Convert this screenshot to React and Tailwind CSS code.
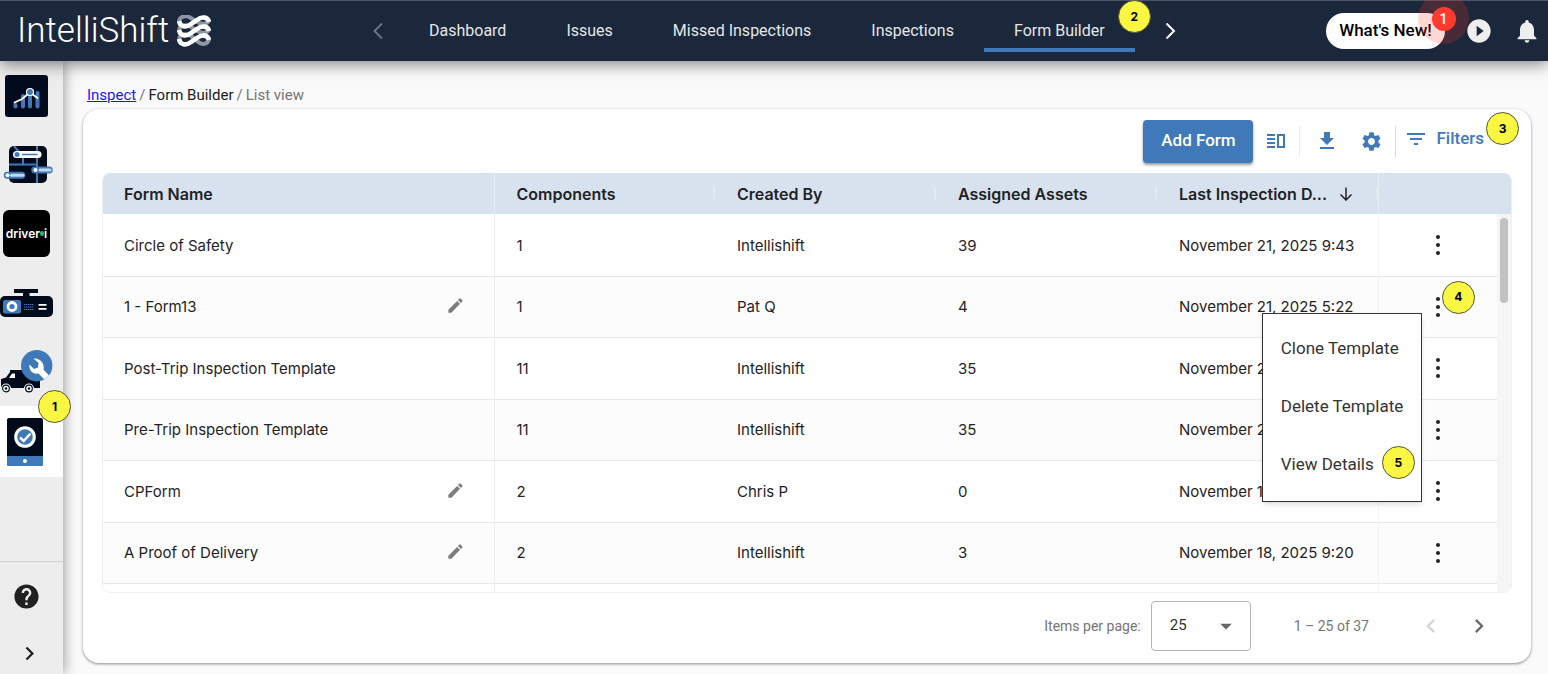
import {
  MdArrowDropDown,
  MdChevronLeft,
  MdChevronRight,
  MdDownload,
  MdEdit,
  MdFilterList,
  MdHelp,
  MdNotifications,
  MdPlayCircleFilled,
  MdSettings,
} from 'react-icons/md';

const tabs = ['Dashboard', 'Issues', 'Missed Inspections', 'Inspections', 'Form Builder'];

const forms = [
  { name: 'Circle of Safety', components: 1, createdBy: 'Intellishift', assets: 39, date: 'November 21, 2025 9:43' },
  { name: '1 - Form13', components: 1, createdBy: 'Pat Q', assets: 4, date: 'November 21, 2025 5:22', editable: true, menuOpen: true },
  { name: 'Post-Trip Inspection Template', components: 11, createdBy: 'Intellishift', assets: 35, date: 'November 20, 2025 8:15' },
  { name: 'Pre-Trip Inspection Template', components: 11, createdBy: 'Intellishift', assets: 35, date: 'November 20, 2025 7:50' },
  { name: 'CPForm', components: 2, createdBy: 'Chris P', assets: 0, date: 'November 19, 2025 4:31', editable: true },
  { name: 'A Proof of Delivery', components: 2, createdBy: 'Intellishift', assets: 3, date: 'November 18, 2025 9:20', editable: true },
];

function Marker({ number, className }) {
  return (
    <span
      className={`absolute z-30 flex size-[33px] items-center justify-center rounded-full border border-[#55553a] bg-[#f9f741] font-['Inter',sans-serif] text-xs font-bold text-black ${className}`}
    >
      {number}
    </span>
  );
}

function LogoMark() {
  return (
    <svg className="h-8 w-[34px]" viewBox="0 0 34 32" fill="none" aria-hidden="true">
      <g stroke="#8f96a3" strokeWidth="4">
        <path d="M2 6C3 1 9 0 14 3L20 7C25 10 31 9 32 5" />
        <path d="M2 15C3 10 9 9 14 12L20 16C25 19 31 18 32 14" />
        <path d="M2 24C3 19 9 18 14 21L20 26C25 31 31 29 32 24" />
      </g>
      <g stroke="#ffffff" strokeWidth="4.6">
        <path d="M2 6C3 12 9 13 14 9L20 5C25 1 31 2 32 7" />
        <path d="M2 15C3 21 9 22 14 18L20 14C25 10 31 11 32 16" />
        <path d="M2 24C3 30 9 31 14 27L20 23C25 19 31 20 32 25" />
      </g>
    </svg>
  );
}

function ChartIcon() {
  return (
    <svg className="h-[42px] w-[43px]" viewBox="0 0 43 42" fill="none" aria-hidden="true">
      <rect width="43" height="42" rx="3" fill="#010b1c" />
      <g stroke="#4079b9" strokeWidth="4" strokeLinecap="round">
        <path d="M10.5 30v1.5M18 21v10.5M25 15v16.5M32.5 18v13.5" />
      </g>
      <path d="M9.5 27.5L17 24L25 17.5L32.5 23" stroke="#fff" strokeWidth="1.8" strokeLinecap="round" />
      <circle cx="25" cy="17" r="3.5" fill="#4079b9" stroke="#fff" strokeWidth="1.2" />
    </svg>
  );
}

function MapIcon() {
  return (
    <svg className="h-[38px] w-[50px]" viewBox="0 0 50 38" fill="none" aria-hidden="true">
      <rect x="6" y="0" width="38" height="37" rx="5" fill="#010b1c" />
      <g stroke="#4079b9" strokeWidth="2">
        <path d="M6 18.5H34M34 0V37M20 12V18M11 0L16 6" />
      </g>
      <rect x="10" y="5" width="28.5" height="7" rx="3.5" fill="#fff" />
      <circle cx="14" cy="8.5" r="2.5" fill="#4079b9" />
      <path d="M19 8.5H34.5" stroke="#4079b9" strokeWidth="1.5" />
      <rect x="1.5" y="26.5" width="20" height="5.5" rx="2.7" fill="#4079b9" stroke="#4079b9" strokeWidth="1.5" />
      <circle cx="4.5" cy="29.2" r="2" fill="#fff" />
      <path d="M8.5 29.2H20" stroke="#c5d7ea" strokeWidth="3" strokeLinecap="round" />
      <rect x="29" y="21.3" width="20" height="5.5" rx="2.7" fill="#4079b9" stroke="#4079b9" strokeWidth="1.5" />
      <circle cx="32.5" cy="24" r="2" fill="#fff" />
      <path d="M37 24H47" stroke="#c5d7ea" strokeWidth="3" strokeLinecap="round" />
    </svg>
  );
}

function DashcamIcon() {
  return (
    <svg className="h-[28px] w-[53px]" viewBox="0 0 53 28" fill="none" aria-hidden="true">
      <path d="M14 0H38V4H29.5V8H23V4H14Z" fill="#010b1c" />
      <rect y="7" width="53" height="21" rx="5" fill="#010b1c" />
      <rect x="3" y="11" width="18" height="13.5" rx="2" fill="#4079b9" />
      <circle cx="12" cy="17.5" r="4" fill="#4079b9" stroke="#fff" strokeWidth="2.8" />
      <path d="M24 15.5H34M24 18H34M24 20.5H34" stroke="#4079b9" strokeWidth="1" strokeDasharray="1.5 .5" />
      <path d="M38.5 15.8H46.5M38.5 19.8H46.5" stroke="#fff" strokeWidth="1.8" />
    </svg>
  );
}

function MaintenanceIcon() {
  return (
    <svg className="h-[43px] w-[53px]" viewBox="0 0 53 43" fill="none" aria-hidden="true">
      <path d="M1 29L6 27.5L10 22V20H28V23H40V38H1Z" fill="#010b1c" />
      <path d="M9 28L12 23.5H15V28Z" fill="#fff" />
      <g fill="#010b1c" stroke="#ededed" strokeWidth="1.2">
        <circle cx="6" cy="38.5" r="4.5" />
        <circle cx="29" cy="38.5" r="4.5" />
      </g>
      <circle cx="6" cy="38.5" r="2" fill="#010b1c" stroke="#fff" strokeWidth="1.5" />
      <circle cx="29" cy="38.5" r="2" fill="#010b1c" stroke="#fff" strokeWidth="1.5" />
      <circle cx="36.7" cy="15.7" r="15.7" fill="#4079b9" />
      <path
        d="M33.5 8.5L38.5 13L38 17.5L34 19L29.5 14.5C28.5 20 32.5 24.5 38.5 23.5L44.5 29.5L49 25.5L43.5 19.5C45 13 39.5 7.5 33.5 8.5Z"
        fill="#fff"
      />
    </svg>
  );
}

function InspectIcon() {
  return (
    <svg className="h-[48px] w-[36px]" viewBox="0 0 36 48" fill="none" aria-hidden="true">
      <rect width="36" height="48" rx="2" fill="#010b1c" />
      <path d="M0 38H36V46A2 2 0 0 1 34 48H2A2 2 0 0 1 0 46Z" fill="#4079b9" />
      <circle cx="18" cy="43" r="2" fill="#fff" />
      <circle cx="18" cy="19" r="9.3" fill="#4079b9" stroke="#fff" strokeWidth="3" />
      <path d="M13 19.5L16.7 23L23.5 15.5" stroke="#fff" strokeWidth="2.5" />
    </svg>
  );
}

function ColumnsIcon() {
  return (
    <svg className="h-[14px] w-[18px]" viewBox="0 0 18 14" fill="none" aria-hidden="true">
      <path d="M0 1H8M0 5H8M0 9H8M0 13H8" stroke="currentColor" strokeWidth="1.8" />
      <rect x="11" y="1" width="6" height="12" stroke="currentColor" strokeWidth="2" />
    </svg>
  );
}

function Header() {
  return (
    <header className="relative z-20 flex h-[61px] shrink-0 items-center border-t border-[#4b5565] bg-[#1b273a] pr-[7px] shadow-[0_2px_16px_rgba(0,0,0,0.55)]">
      <div className="flex w-[364px] shrink-0 items-center gap-2 pl-[17px] text-white">
        <span className="text-[35px] leading-10 font-light">IntelliShift</span>
        <LogoMark />
      </div>

      <nav className="flex items-center">
        <button type="button" aria-label="Previous tabs" className="flex w-[35px] text-[#727a88]">
          <svg className="ml-2 h-4 w-3" viewBox="0 0 12 16" fill="none" stroke="currentColor" strokeWidth="1.8">
            <path d="M10 0.5L2.5 8L10 15.5" />
          </svg>
        </button>
        {tabs.map((tab) => (
          <a
            key={tab}
            href="#"
            className={`relative flex h-[42px] items-center border-y-4 border-t-transparent px-[30px] text-base whitespace-nowrap text-[#e4e6e9] ${
              tab === 'Form Builder' ? 'border-b-[#4079b9]' : 'border-b-transparent'
            }`}
          >
            {tab}
            {tab === 'Form Builder' && <Marker number={2} className="-top-3.5 -right-4" />}
          </a>
        ))}
        <button type="button" aria-label="Next tabs" className="ml-[30px] text-white">
          <svg className="h-4 w-3" viewBox="0 0 12 16" fill="none" stroke="currentColor" strokeWidth="2">
            <path d="M1.5 0.5L9 8L1.5 15.5" />
          </svg>
        </button>
      </nav>

      <div className="ml-auto flex items-center gap-5 text-[#eeeeee]">
        <button type="button" className="relative h-9 w-[119px] rounded-full bg-white text-[17px] font-medium text-black">
          What's New!
          <span className="absolute -top-5 -right-6 flex size-[51px] items-center justify-center rounded-full bg-[#ff3b30]/20">
            <span className="flex size-6 items-center justify-center rounded-full bg-[#ff3b30] text-sm text-white">1</span>
          </span>
        </button>
        <button type="button" aria-label="Play tutorial">
          <MdPlayCircleFilled size={28} />
        </button>
        <button type="button" aria-label="Notifications">
          <MdNotifications size={28} />
        </button>
      </div>
    </header>
  );
}

function Sidebar() {
  return (
    <aside className="relative z-10 flex w-[63px] shrink-0 flex-col justify-between bg-[#ededed] shadow-[2px_0_12px_rgba(0,0,0,0.35)]">
      <nav>
        <a href="#" aria-label="Analytics" className="flex h-[69px] items-center pl-[5px]">
          <ChartIcon />
        </a>
        <a href="#" aria-label="Map" className="flex h-[69px] items-center pl-[3px]">
          <MapIcon />
        </a>
        <a href="#" className="flex h-[69px] items-center pl-[3px]">
          <span className="flex size-[47px] items-center justify-center rounded-md bg-black font-['Inter',sans-serif] text-xs font-semibold text-white">
            driver<span className="h-[5px] w-1 rounded-full bg-[#2fb56a]" />i
          </span>
        </a>
        <a href="#" aria-label="Cameras" className="flex h-[69px] items-center">
          <DashcamIcon />
        </a>
        <a href="#" aria-label="Maintenance" className="flex h-[69px] items-center">
          <MaintenanceIcon />
        </a>
        <a href="#" aria-label="Inspect" className="relative flex h-[71px] items-center bg-white pl-[7px]">
          <InspectIcon />
          <Marker number={1} className="-top-4 left-[38px]" />
        </a>
      </nav>

      <div className="flex h-[113px] flex-col items-start justify-between border-t border-[#cfcfcf] pt-5 pb-[7px] pl-3 text-[#212121]">
        <button type="button" aria-label="Help">
          <MdHelp size={29} />
        </button>
        <button type="button" aria-label="Expand sidebar" className="pl-1">
          <MdChevronRight size={27} />
        </button>
      </div>
    </aside>
  );
}

function Toolbar() {
  return (
    <div className="flex h-16 items-center justify-end pr-7 text-[#4079b9]">
      <button
        type="button"
        className="h-[43px] w-[110px] rounded bg-[#4079b9] text-[17px] font-medium text-white shadow-[0_2px_3px_rgba(0,0,0,0.4)]"
      >
        Add Form
      </button>
      <button type="button" aria-label="Choose columns" className="mx-3.5">
        <ColumnsIcon />
      </button>
      <div className="flex h-[31px] items-center gap-[18px] border-x border-l-[#ebebeb] border-r-[#d9d9d9] px-3">
        <button type="button" aria-label="Download" className="px-[3px]">
          <MdDownload size={24} />
        </button>
        <button type="button" aria-label="Settings">
          <MdSettings size={23} />
        </button>
      </div>
      <button type="button" className="relative flex items-center gap-2 pb-1 pl-2 text-[17px] font-medium">
        <MdFilterList size={24} />
        Filters
        <Marker number={3} className="-top-3.5 left-full ml-0.5" />
      </button>
    </div>
  );
}

function RowMenu() {
  return (
    <div
      role="menu"
      className="absolute top-[18px] right-full z-20 mr-1 flex h-[189px] w-40 flex-col justify-center border border-[#333333] bg-white font-['Roboto',sans-serif] text-[17px] text-[#333333] shadow-md"
    >
      <button type="button" role="menuitem" className="h-[58px] pl-[18px] text-left whitespace-nowrap">
        Clone Template
      </button>
      <button type="button" role="menuitem" className="h-[58px] pl-[18px] text-left whitespace-nowrap">
        Delete Template
      </button>
      <button type="button" role="menuitem" className="relative h-[58px] pl-[18px] text-left whitespace-nowrap">
        View Details
        <Marker number={5} className="top-2.5 right-1.5" />
      </button>
    </div>
  );
}

function HeaderCell({ children }) {
  return (
    <th className="relative pl-[22px] text-left font-semibold whitespace-nowrap">
      {children}
      <span className="absolute top-3.5 right-0 h-3 w-0.5 bg-[#e4eaf2]" />
    </th>
  );
}

function FormsTable() {
  return (
    <div className="relative h-[420px] overflow-hidden rounded-lg border-x border-b border-[#f0f0f0] font-['Inter',sans-serif] text-[#1f2326]">
      <table className="w-full table-fixed border-collapse text-[15px]">
        <colgroup>
          <col className="w-[391px]" />
          <col />
          <col />
          <col />
          <col />
          <col className="w-[133px]" />
        </colgroup>
        <thead>
          <tr className="h-[41px] bg-[#d8e2ee] text-base">
            <th className="border-r border-[#e8edf3] pl-[21px] text-left font-semibold">Form Name</th>
            <HeaderCell>Components</HeaderCell>
            <HeaderCell>Created By</HeaderCell>
            <HeaderCell>Assigned Assets</HeaderCell>
            <HeaderCell>
              <span className="flex items-center gap-3">
                Last Inspection D...
                <svg className="h-3.5 w-3.5" viewBox="0 0 14 14" fill="none" stroke="currentColor" strokeWidth="1.5">
                  <path d="M7 0.5V13M1.5 7.5L7 13L12.5 7.5" />
                </svg>
              </span>
            </HeaderCell>
            <th className="border-l border-[#e8edf3]" aria-label="Actions" />
          </tr>
        </thead>
        <tbody>
          {forms.map((form) => (
            <tr key={form.name} className="border-b border-[#e6e8ee] odd:h-[62px] even:h-[61px] even:bg-[#fcfcfc]">
              <td className="border-r border-[#eeeeee] pt-0.5 pr-[29px] pl-[21px]">
                <div className="flex items-center justify-between">
                  {form.name}
                  {form.editable && (
                    <button type="button" aria-label={`Edit ${form.name}`} className="pb-1 text-[#7d7d7d]">
                      <MdEdit size={19} />
                    </button>
                  )}
                </div>
              </td>
              <td className="pt-0.5 pl-[22px]">{form.components}</td>
              <td className="pt-0.5 pl-[22px]">{form.createdBy}</td>
              <td className="pt-0.5 pl-[22px]">{form.assets}</td>
              <td className="pt-0.5 pl-[22px] whitespace-nowrap">{form.date}</td>
              <td className="border-l border-[#f4f4f4] pr-3.5">
                <div className="relative mx-auto size-6">
                  <button type="button" aria-label={`Actions for ${form.name}`} className="flex size-6 items-center justify-center">
                    <svg className="h-5 w-1" viewBox="0 0 4 20" fill="currentColor">
                      <circle cx="2" cy="2" r="2" />
                      <circle cx="2" cy="10" r="2" />
                      <circle cx="2" cy="18" r="2" />
                    </svg>
                  </button>
                  {form.menuOpen && <RowMenu />}
                  {form.menuOpen && <Marker number={4} className="-top-3.5 left-4" />}
                </div>
              </td>
            </tr>
          ))}
          <tr className="h-[62px]">
            <td className="border-r border-[#eeeeee]" />
            <td colSpan={4} />
            <td className="border-l border-[#f4f4f4]" />
          </tr>
        </tbody>
      </table>

      {/* Scroll track */}
      <div className="absolute top-[41px] right-0 bottom-0 w-3.5 bg-[#f5f5f5] px-[3px] pt-1">
        <div className="h-[85px] rounded-full bg-[#c1c1c1]" />
      </div>
    </div>
  );
}

function Pagination() {
  return (
    <div className="flex h-[70px] items-center justify-end pr-[19px] pb-1 text-sm text-[#757575]">
      <label htmlFor="page-size" className="mr-2.5">
        Items per page:
      </label>
      <div className="relative mr-[43px] text-[#2f2f2f]">
        <select
          id="page-size"
          defaultValue="25"
          className="block h-[50px] w-[100px] appearance-none rounded border border-[#b5b5b5] bg-white pl-[18px] text-[15px]"
        >
          <option>10</option>
          <option>25</option>
          <option>50</option>
        </select>
        <MdArrowDropDown size={28} className="pointer-events-none absolute top-[11px] right-[11px] text-[#666666]" />
      </div>
      <span>1 – 25 of 37</span>
      <button type="button" aria-label="Previous page" className="ml-12 text-[#d5d5d5]" disabled>
        <MdChevronLeft size={28} />
      </button>
      <button type="button" aria-label="Next page" className="ml-5 text-[#6b6b6b]">
        <MdChevronRight size={28} />
      </button>
    </div>
  );
}

export default function App() {
  return (
    <div className="flex min-h-screen flex-col bg-[#fafafa] font-['Roboto',sans-serif]">
      <Header />
      <div className="flex flex-1">
        <Sidebar />
        <main className="min-w-0 flex-1 pt-5 pr-[17px] pb-[11px] pl-5">
          <div className="flex h-7 items-center gap-[3px] pl-1 text-[15px] text-[#757575]">
            <a href="#" className="text-[#1a1af0] underline">
              Inspect
            </a>
            <span>/</span>
            <span className="text-[#212121]">Form Builder</span>
            <span>/</span>
            <span>List view</span>
          </div>
          <section className="rounded-2xl bg-white px-[19px] shadow-[0_1px_3px_rgba(0,0,0,0.45)]">
            <Toolbar />
            <FormsTable />
            <Pagination />
          </section>
        </main>
      </div>
    </div>
  );
}
